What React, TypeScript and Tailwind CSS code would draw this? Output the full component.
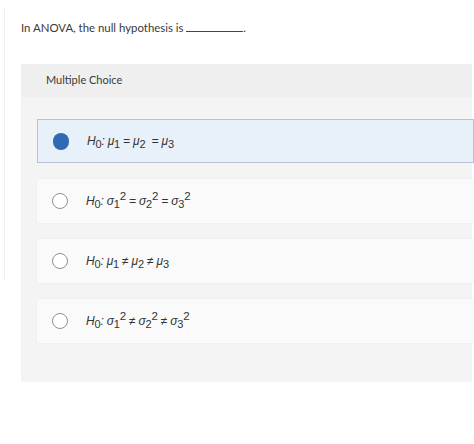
import React from "react";

const Sub = ({ children }: { children: React.ReactNode }) => (
  <span className="relative top-[3px] text-[11px] not-italic">{children}</span>
);
const Sup = ({ children }: { children: React.ReactNode }) => (
  <span className="relative -top-[5px] text-[11.5px] not-italic">{children}</span>
);

const Option = ({ selected, children }: { selected?: boolean; children: React.ReactNode }) => (
  <div
    className={
      "flex h-[44px] w-[437px] shrink-0 items-center " +
      (selected
        ? "border border-[#b7c3d3] bg-[#e8f0fa]"
        : "bg-[#fafafa] shadow-[0_0_2px_rgba(0,0,0,0.06)]")
    }
  >
    <div className="ml-[15px] flex h-[16px] w-[16px] shrink-0 items-center justify-center">
      {selected ? (
        <div className="h-[17px] w-[17px] rounded-full bg-[#2e6bb4]" />
      ) : (
        <div className="h-[16px] w-[16px] rounded-full border-[1.5px] border-[#8c8f92] bg-white" />
      )}
    </div>
    <div className="ml-[18px] text-[12px] italic tracking-[-0.2px] text-[#333] [font-family:'Liberation_Sans',Arial,sans-serif]">
      {children}
    </div>
  </div>
);

export default function App() {
  return (
    <div className="flex h-[444px] w-[474px] overflow-hidden bg-white [font-family:Lato,'Liberation_Sans',sans-serif]">
      <div className="ml-[4px] mt-[8px] h-[272px] w-px shrink-0 bg-[#f1f1f1]" />
      <div className="ml-[16px] flex flex-col">
        <div className="mt-[21px] h-[13px] text-[11.4px] leading-[13px] text-[#3a3a3a]">
          In ANOVA, the null hypothesis is <span className="inline-block w-[57px] border-b border-[#444] align-baseline" />.
        </div>
        <div className="mt-[30px] flex h-[318px] w-[451px] flex-col bg-[#f4f4f4]">
          <div className="flex h-[33px] shrink-0 items-center bg-[#efefef] pl-[25px] text-[11px] text-[#3a3a3a]">
            Multiple Choice
          </div>
          <div className="ml-[16px] mt-[22px] flex flex-col gap-[16px]">
            <Option selected>
              H<Sub>0</Sub>: μ<Sub>1</Sub> = μ<Sub>2</Sub>&nbsp; = μ<Sub>3</Sub>
            </Option>
            <Option>
              H<Sub>0</Sub>: σ<Sub>1</Sub><Sup>2</Sup> = σ<Sub>2</Sub><Sup>2</Sup> = σ<Sub>3</Sub><Sup>2</Sup>
            </Option>
            <Option>
              H<Sub>0</Sub>: μ<Sub>1</Sub> ≠ μ<Sub>2</Sub> ≠ μ<Sub>3</Sub>
            </Option>
            <Option>
              H<Sub>0</Sub>: σ<Sub>1</Sub><Sup>2</Sup> ≠ σ<Sub>2</Sub><Sup>2</Sup> ≠ σ<Sub>3</Sub><Sup>2</Sup>
            </Option>
          </div>
        </div>
      </div>
    </div>
  );
}
